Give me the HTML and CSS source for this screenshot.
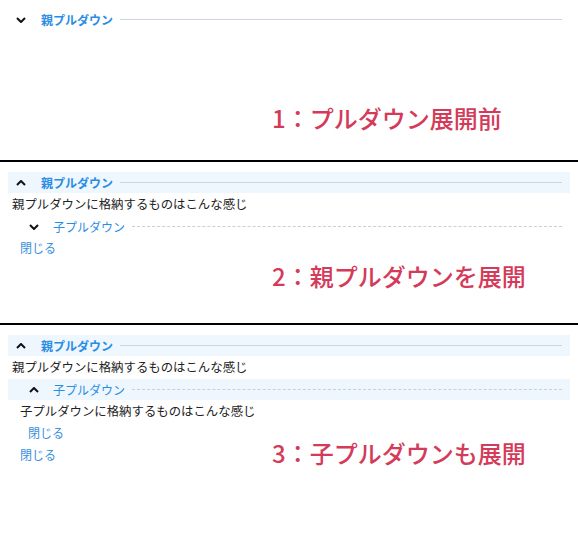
FILE: index.html
```html
<!DOCTYPE html>
<html lang="ja">
<head>
<meta charset="utf-8">
<link rel="stylesheet" href="styles.css">
</head>
<body>
<section class="panel p1">
  <div class="head">
    <svg class="chev" viewBox="0 0 10 6"><path d="M1 1 L5 5 L9 1"/></svg>
    <span class="title bold">親プルダウン</span>
    <span class="rule solid"></span>
  </div>
  <div class="note n1">1：プルダウン展開前</div>
</section>
<section class="panel p2">
  <div class="head open">
    <svg class="chev" viewBox="0 0 10 6"><path d="M1 5 L5 1 L9 5"/></svg>
    <span class="title bold">親プルダウン</span>
    <span class="rule solid"></span>
  </div>
  <div class="body-text">親プルダウンに格納するものはこんな感じ</div>
  <div class="head child">
    <svg class="chev" viewBox="0 0 10 6"><path d="M1 1 L5 5 L9 1"/></svg>
    <span class="title">子プルダウン</span>
    <span class="rule dashed"></span>
  </div>
  <div class="close">閉じる</div>
  <div class="note n2">2：親プルダウンを展開</div>
</section>
<section class="panel p3">
  <div class="head open">
    <svg class="chev" viewBox="0 0 10 6"><path d="M1 5 L5 1 L9 5"/></svg>
    <span class="title bold">親プルダウン</span>
    <span class="rule solid"></span>
  </div>
  <div class="body-text">親プルダウンに格納するものはこんな感じ</div>
  <div class="head child open">
    <svg class="chev" viewBox="0 0 10 6"><path d="M1 5 L5 1 L9 5"/></svg>
    <span class="title">子プルダウン</span>
    <span class="rule dashed"></span>
  </div>
  <div class="body-text inner">子プルダウンに格納するものはこんな感じ</div>
  <div class="close inner">閉じる</div>
  <div class="close">閉じる</div>
  <div class="note n3">3：子プルダウンも展開</div>
</section>
</body>
</html>
```
FILE: styles.css
```css
html, body {
  margin: 0;
  padding: 0;
  background: #fff;
}
body {
  width: 578px;
  font-family: "Noto Sans CJK JP", "Noto Sans", sans-serif;
  color: #222;
}
.panel {
  position: relative;
  padding: 0 8px;
  display: flex;
  flex-direction: column;
}
.p1 {
  height: 151px;
  padding-top: 9px;
  border-bottom: 2px solid #000;
}
.p2 {
  height: 151px;
  padding-top: 10px;
  border-bottom: 2px solid #000;
}
.p3 {
  height: 208px;
  padding-top: 10px;
}
.head {
  display: flex;
  align-items: center;
  height: 21px;
  padding: 0 8px;
}
.head.open {
  background: #eef6fe;
}
.head.child {
  padding-left: 21px;
  margin-top: 1px;
}
.chev {
  width: 10px;
  height: 6px;
  flex: none;
  fill: none;
  stroke: #111;
  stroke-width: 2;
}
.title {
  margin-left: 15px;
  font-size: 12px;
  line-height: 21px;
  color: #2a8de4;
  white-space: nowrap;
}
.head.child .title {
  margin-left: 14px;
}
.title.bold {
  font-weight: 700;
}
.rule {
  flex: 1;
  margin-left: 7px;
  height: 0;
}
.rule.solid {
  border-top: 1px solid #cdd6df;
}
.rule.dashed {
  border-top: 1px dashed #cfcfcf;
}
.body-text {
  font-size: 12.4px;
  line-height: 22px;
  padding-left: 4px;
  color: #222;
  white-space: nowrap;
}
.body-text.inner {
  padding-left: 12px;
}
.close {
  font-size: 12px;
  line-height: 22px;
  padding-left: 12px;
  color: #3b8fdc;
}
.close.inner {
  padding-left: 20px;
}
.note {
  position: absolute;
  left: 272px;
  font-size: 24px;
  line-height: 30px;
  font-weight: 500;
  color: #d43b5a;
  white-space: nowrap;
}
.n1 { top: 103px; }
.n2 { top: 99px; }
.n3 { top: 113px; }
```
